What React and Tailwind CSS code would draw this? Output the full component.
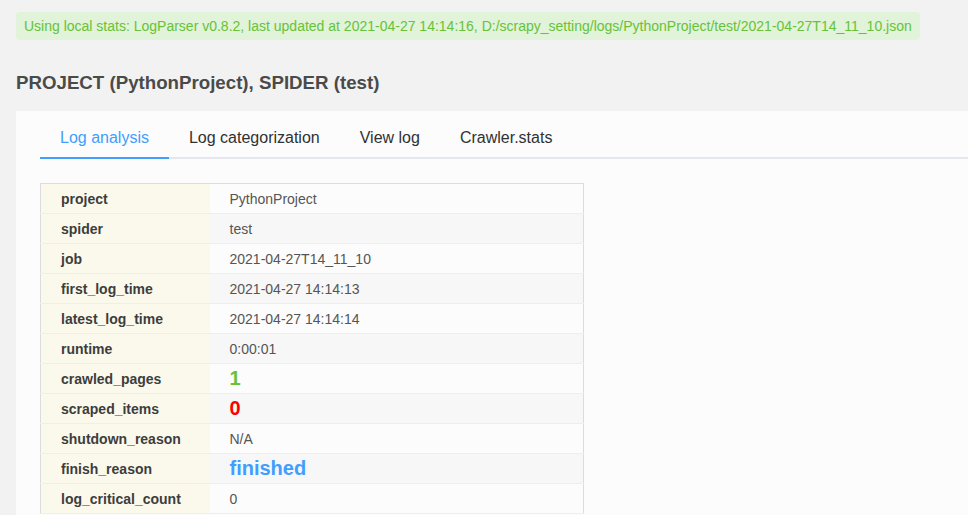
import React from 'react';

const rows = [
  { k: 'project', v: 'PythonProject' },
  { k: 'spider', v: 'test' },
  { k: 'job', v: '2021-04-27T14_11_10' },
  { k: 'first_log_time', v: '2021-04-27 14:14:13' },
  { k: 'latest_log_time', v: '2021-04-27 14:14:14' },
  { k: 'runtime', v: '0:00:01' },
  { k: 'crawled_pages', v: '1', cls: 'text-[20px] font-bold text-[#67c23a]' },
  { k: 'scraped_items', v: '0', cls: 'text-[20px] font-bold text-[#ff0000]' },
  { k: 'shutdown_reason', v: 'N/A' },
  { k: 'finish_reason', v: 'finished', cls: 'text-[20px] font-bold text-[#409eff]' },
  { k: 'log_critical_count', v: '0' },
];

const tabs = ['Log analysis', 'Log categorization', 'View log', 'Crawler.stats'];

export default function App() {
  return (
    <div className="min-h-[515px] bg-[#f2f2f2] pt-3 font-['Liberation_Sans',Arial,sans-serif] overflow-hidden">
      {/* Alert */}
      <div className="ml-4 w-[904px] h-7 rounded bg-[#e1f3d8] text-[#67c23a] text-sm leading-7 px-2">
        Using local stats: LogParser v0.8.2, last updated at 2021-04-27 14:14:16, D:/scrapy_setting/logs/PythonProject/test/2021-04-27T14_11_10.json
      </div>

      <h2 className="ml-4 mt-[32px] text-[18.7px] font-bold text-[#4a4a4a] leading-[22px]">
        PROJECT (PythonProject), SPIDER (test)
      </h2>

      {/* Panel */}
      <div className="ml-4 mt-[17px] bg-[#fcfcfc] pl-6 pt-[6px] pb-6">
        <div className="flex border-b-2 border-[#e4e7ed] h-[42px]">
          {tabs.map((t, i) => (
            <div
              key={t}
              className={`px-5 h-[42px] leading-[42px] text-base -mb-[2px] ${
                i === 0 ? 'text-[#409eff] border-b-2 border-[#409eff]' : 'text-[#303133]'
              }`}
            >
              {t}
            </div>
          ))}
        </div>

        <table className="mt-6 w-[544px] border border-[#dcdcdc] border-collapse text-sm">
          <tbody>
            {rows.map((r, i) => (
              <tr key={r.k} className="h-[30px] border-b border-[#ebeef5]">
                <td className="w-[169px] bg-[#fbf9ec] pl-5 font-bold text-[#3d3d3d]">{r.k}</td>
                <td className={`pl-5 ${i % 2 ? 'bg-[#f7f7f7]' : 'bg-[#fcfcfc]'} ${r.cls || 'text-[#555]'}`}>
                  {r.v}
                </td>
              </tr>
            ))}
          </tbody>
        </table>
      </div>
    </div>
  );
}
